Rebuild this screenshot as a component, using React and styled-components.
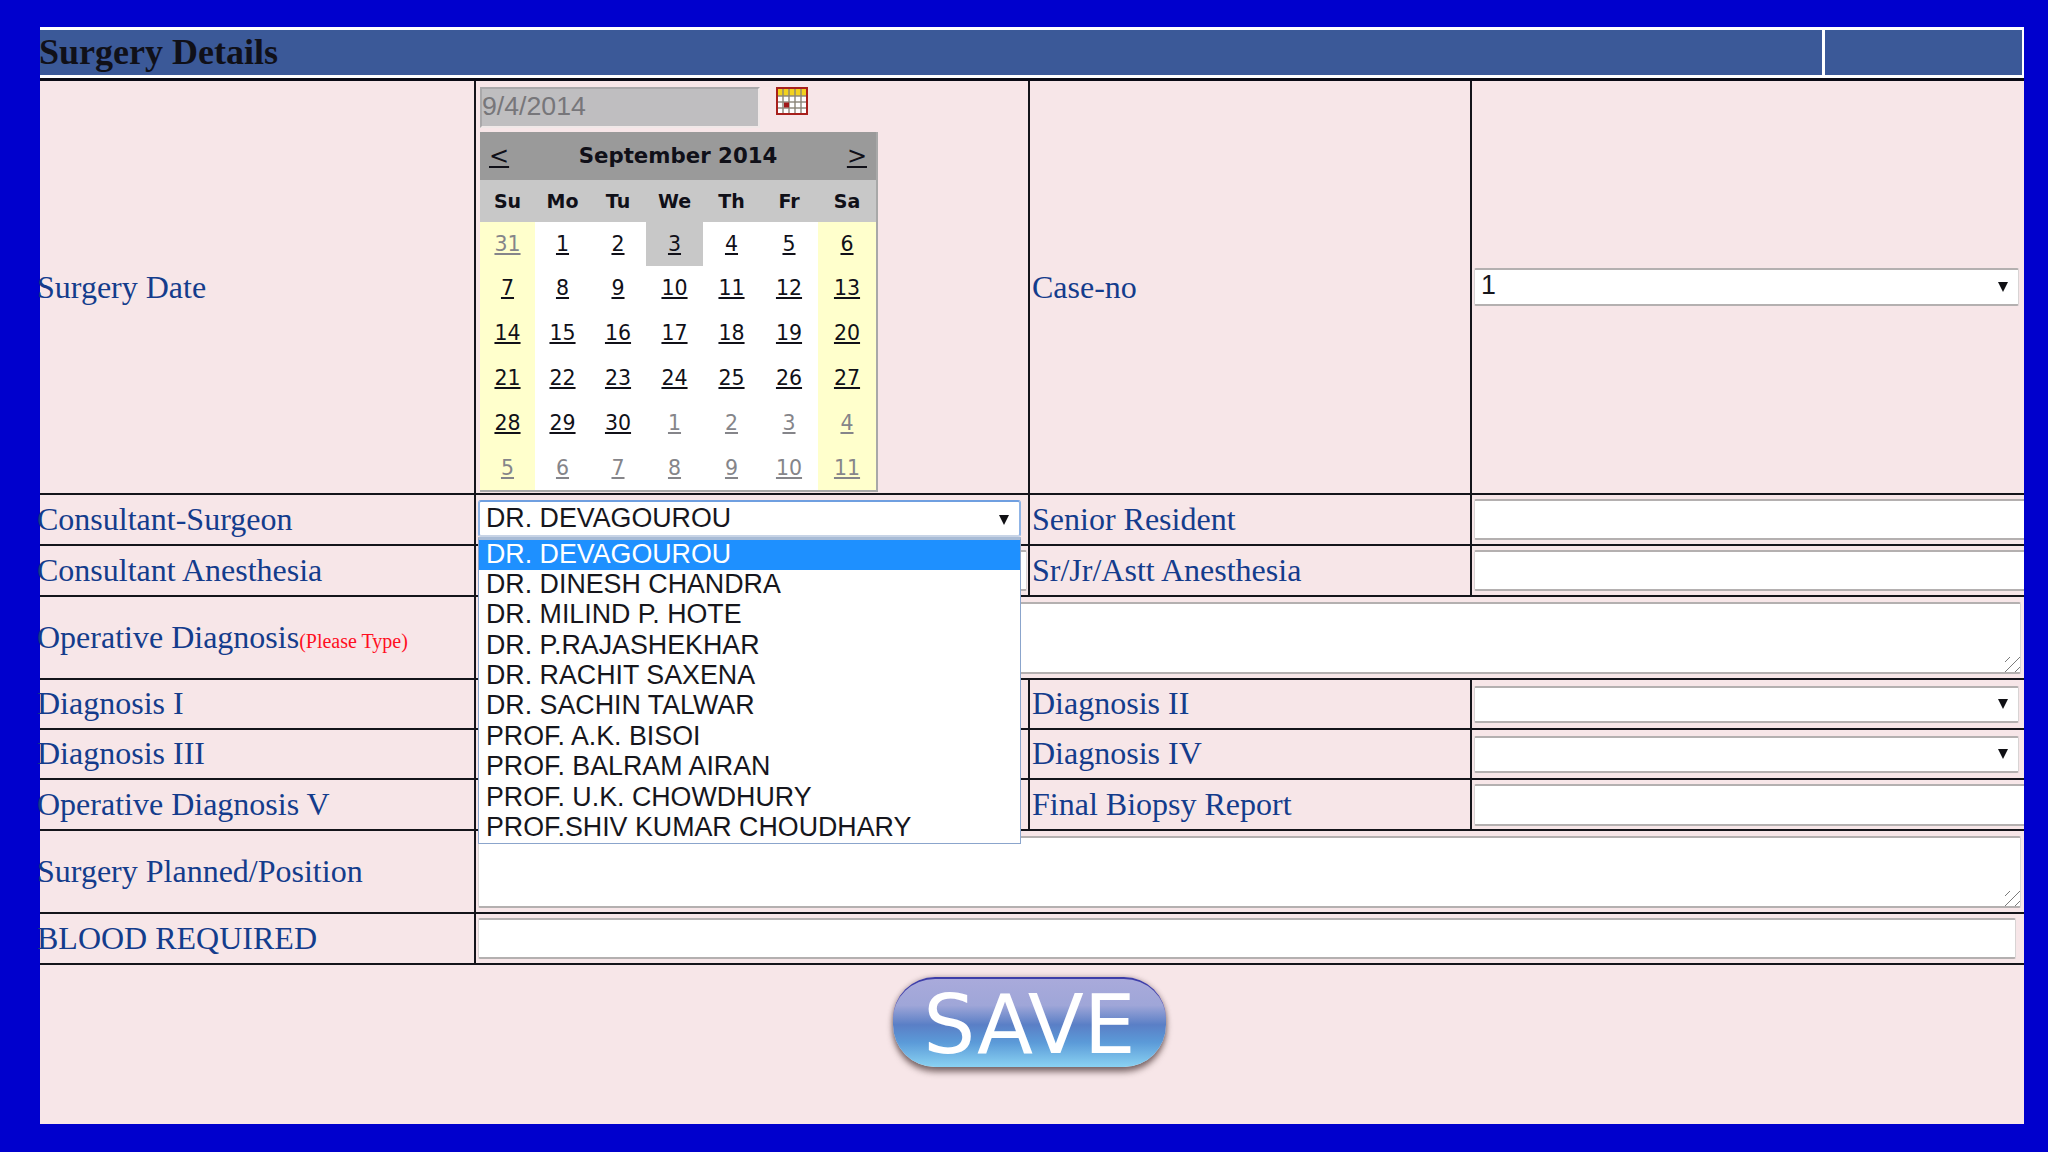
import React from "react";
import styled, { createGlobalStyle, css } from "styled-components";

const Global = createGlobalStyle`
  * { box-sizing: border-box; }
  html, body { margin: 0; padding: 0; background: #0000cd; }
  body { width: 2048px; height: 1152px; overflow: hidden; }
`;

const Page = styled.div`
  width: 2048px;
  height: 1152px;
  padding: 27px 24px 28px 40px;
`;

const Panel = styled.main`
  height: 1097px;
  background: #f7e6e8;
`;

const TitleBar = styled.header`
  display: flex;
  height: 51px;
  background: #ffffff;
  border-top: 3px solid #ffffff;
  border-bottom: 3px solid #ffffff;
  border-right: 2px solid #ffffff;
  gap: 3px;
`;

const TitleCell = styled.div`
  flex: ${(p) => (p.$side ? "0 0 197px" : "1 1 auto")};
  background: #3b5998;
  display: flex;
  align-items: center;
`;

const Title = styled.h1`
  margin: -2px 0 0 -1px;
  font: bold 36px "Liberation Serif", "Times New Roman", serif;
  color: #101018;
`;

const FormTable = styled.table`
  table-layout: fixed;
  width: 1984px;
  border-spacing: 0;
  border-collapse: separate;
  border-top: 3px solid #0a0a14;
`;

const Row = styled.tr`
  height: ${(p) => p.$h}px;
`;

const Cell = styled.td`
  padding: 0;
  vertical-align: middle;
  border-bottom: 2px solid #14141a;
  ${(p) => p.$rule && css`border-left: 2px solid #14141a;`}
  ${(p) => p.$field && css`padding-left: 2px;`}
  ${(p) => p.$clip && css`overflow: hidden;`}
`;

const Label = styled.label`
  display: block;
  margin: ${(p) => (p.$tight ? "-2px" : "0")} 0 0 ${(p) => (p.$inner ? "2px" : "-3px")};
  font: 32px "Liberation Serif", "Times New Roman", serif;
  color: #143c8c;
  white-space: nowrap;
`;

const Hint = styled.span`
  font-size: 20px;
  color: #ff0f1f;
`;

const fieldFrame = css`
  display: block;
  background: #ffffff;
  border-style: solid;
  border-color: #b4b0b0 #d8d4d4 #b4b0b0 #d8d4d4;
  border-width: 2px 1px 2px 1px;
  border-radius: 2px;
  outline: none;
`;

const TextField = styled.input`
  ${fieldFrame}
  width: ${(p) => p.$w}px;
  height: ${(p) => p.$h}px;
`;

const NoteField = styled.textarea`
  ${fieldFrame}
  width: 1543px;
  height: 72px;
  &::-webkit-resizer {
    background: repeating-linear-gradient(135deg, transparent 0 3px, #7a7a7a 3px 4px, transparent 4px 7px);
  }
`;

const DateCellBody = styled.div`
  display: flex;
  flex-direction: column;
  gap: 4px;
  padding: 5px 0 0 4px;
`;

const DateRow = styled.div`
  display: flex;
  align-items: flex-start;
  gap: 16px;
`;

const DateField = styled.input`
  display: block;
  width: 280px;
  height: 41px;
  padding: 0 0 2px;
  background: #bfbec0;
  color: #77767a;
  font: 26.7px "Liberation Sans", Arial, sans-serif;
  border-style: solid;
  border-color: #a9a8aa #f0e8e8 #f0e8e8 #a9a8aa;
  border-width: 2px;
  outline: none;
`;

const Calendar = styled.section`
  width: 398px;
  background: #ffffff;
  border-right: 2px solid #a8a8a8;
  border-bottom: 2px solid #a8a8a8;
  font-family: "DejaVu Sans", Verdana, sans-serif;
  color: #101018;
`;

const CalendarHead = styled.div`
  display: flex;
  align-items: center;
  justify-content: space-between;
  height: 48px;
  padding: 0 9px 0 9px;
  background: #9a9a9a;
  font-size: 21.3px;
  font-weight: bold;
`;

const NavLink = styled.a`
  color: #101018;
  font-weight: normal;
  font-size: 24px;
  text-decoration: underline;
`;

const WeekGrid = styled.div`
  display: grid;
  grid-template-columns: 55px 55px 56px 57px 57px 58px 58px;
`;

const WeekName = styled.div`
  height: 42px;
  line-height: 42px;
  text-align: center;
  background: #c8c8c8;
  font-size: 19px;
  font-weight: bold;
`;

const DayCell = styled.div`
  height: 44.8px;
  line-height: 45px;
  text-align: center;
  font-size: 20.5px;
  background: ${(p) => (p.$today ? "#c8c8c8" : p.$weekend ? "#ffffcc" : "#ffffff")};
`;

const DayLink = styled.a`
  color: ${(p) => (p.$muted ? "#85858a" : "#101018")};
  text-decoration: underline;
`;

const SelectWrap = styled.div`
  position: relative;
  width: ${(p) => p.$w}px;
  margin-bottom: 3px;
`;

const SelectBox = styled.div`
  ${fieldFrame}
  display: flex;
  align-items: center;
  justify-content: space-between;
  width: ${(p) => p.$w}px;
  height: ${(p) => p.$h}px;
  padding: 0 10px 3px 6px;
  font: 26.8px "Liberation Sans", Arial, sans-serif;
  color: #16161c;
  ${(p) =>
    p.$focus &&
    css`
      padding-bottom: 0;
      border-color: #6f9fe0 #8fb4e6 #c8d4e6 #8fb4e6;
      border-width: 2px;
      border-radius: 3px;
    `}
`;

const Arrow = styled.span`
  width: 0;
  height: 0;
  margin-top: 3px;
  border-left: 5px solid transparent;
  border-right: 5px solid transparent;
  border-top: 10px solid #101014;
`;

const OptionList = styled.ul`
  position: absolute;
  z-index: 5;
  top: 37px;
  left: 0;
  width: 543px;
  margin: 0;
  padding: 0;
  list-style: none;
  background: #ffffff;
  border: 1px solid #8ba5cc;
  border-top: 3px solid #a9bcd6;
  font: 26.8px "Liberation Sans", Arial, sans-serif;
  color: #16161c;
`;

const Option = styled.li`
  height: 30.4px;
  line-height: 29px;
  padding-left: 7px;
  white-space: nowrap;
  ${(p) => p.$on && css`background: #1e90ff; color: #ffffff;`}
`;

const SaveRow = styled.div`
  display: flex;
  justify-content: center;
  padding: 12px 5px 0 0;
`;

const SaveButton = styled.button`
  width: 273px;
  height: 90px;
  padding: 4px 0 0;
  border: none;
  border-top: 2px solid #3d3da8;
  border-radius: 42px;
  background: linear-gradient(180deg, #a9aadb 0%, #9fa6d8 30%, #5a7fc6 52%, #5b9ad8 72%, #8ad2f2 100%);
  box-shadow: 0 5px 6px rgba(70, 50, 50, 0.65), 0 0 5px rgba(70, 50, 60, 0.35);
  color: #ffffff;
  font: 82px "DejaVu Sans", Verdana, sans-serif;
  line-height: 1;
`;

const weekNames = ["Su", "Mo", "Tu", "We", "Th", "Fr", "Sa"];
const days = [
  31, 1, 2, 3, 4, 5, 6, 7, 8, 9, 10, 11, 12, 13, 14, 15, 16, 17, 18, 19, 20, 21, 22, 23, 24, 25, 26, 27, 28, 29, 30,
  1, 2, 3, 4, 5, 6, 7, 8, 9, 10, 11,
];
const surgeons = [
  "DR. DEVAGOUROU",
  "DR. DINESH CHANDRA",
  "DR. MILIND P. HOTE",
  "DR. P.RAJASHEKHAR",
  "DR. RACHIT SAXENA",
  "DR. SACHIN TALWAR",
  "PROF. A.K. BISOI",
  "PROF. BALRAM AIRAN",
  "PROF. U.K. CHOWDHURY",
  "PROF.SHIV KUMAR CHOUDHARY",
];

const CalendarIcon = () => (
  <svg width="32" height="28" viewBox="0 0 32 28" aria-hidden="true">
    <rect x="1" y="1" width="30" height="26" fill="#fff" stroke="#a8201c" strokeWidth="2" />
    <rect x="2" y="2" width="28" height="7" fill="#f2d21e" />
    {[7, 13, 19, 25].map((x) => (
      <line key={x} x1={x} y1="2" x2={x} y2="26" stroke="#8a8478" strokeWidth="1.4" />
    ))}
    {[9, 15, 21].map((y) => (
      <line key={y} x1="2" y1={y} x2="30" y2={y} stroke="#8a8478" strokeWidth="1.4" />
    ))}
    <rect x="8" y="15.5" width="5" height="5" fill="#a01818" />
  </svg>
);

const MonthPicker = () => (
  <Calendar>
    <CalendarHead>
      <NavLink>&lt;</NavLink>
      <span>September 2014</span>
      <NavLink>&gt;</NavLink>
    </CalendarHead>
    <WeekGrid>
      {weekNames.map((n) => (
        <WeekName key={n}>{n}</WeekName>
      ))}
      {days.map((d, i) => (
        <DayCell key={i} $weekend={i % 7 === 0 || i % 7 === 6} $today={i === 3}>
          <DayLink $muted={i === 0 || i > 30}>{d}</DayLink>
        </DayCell>
      ))}
    </WeekGrid>
  </Calendar>
);

const EmptySelect = ({ w = 542, h = 37 }) => (
  <SelectBox $w={w} $h={h}>
    <span />
    <Arrow />
  </SelectBox>
);

export default function App() {
  return (
    <Page>
      <Global />
      <Panel>
        <TitleBar>
          <TitleCell>
            <Title>Surgery Details</Title>
          </TitleCell>
          <TitleCell $side />
        </TitleBar>
        <FormTable>
          <colgroup>
            <col style={{ width: 434 }} />
            <col style={{ width: 554 }} />
            <col style={{ width: 442 }} />
            <col style={{ width: 554 }} />
          </colgroup>
          <tbody>
            <Row $h={414}>
              <Cell>
                <Label>Surgery Date</Label>
              </Cell>
              <Cell $rule>
                <DateCellBody>
                  <DateRow>
                    <DateField readOnly value="9/4/2014" />
                    <CalendarIcon />
                  </DateRow>
                  <MonthPicker />
                </DateCellBody>
              </Cell>
              <Cell $rule>
                <Label $inner>Case-no</Label>
              </Cell>
              <Cell $rule $field>
                <SelectBox $w={545} $h={38}>
                  <span>1</span>
                  <Arrow />
                </SelectBox>
              </Cell>
            </Row>
            <Row $h={51}>
              <Cell>
                <Label>Consultant-Surgeon</Label>
              </Cell>
              <Cell $rule $field>
                <SelectWrap $w={543}>
                  <SelectBox $focus $w={543} $h={37}>
                    <span>DR. DEVAGOUROU</span>
                    <Arrow />
                  </SelectBox>
                  <OptionList>
                    {surgeons.map((s, i) => (
                      <Option key={s} $on={i === 0}>
                        {s}
                      </Option>
                    ))}
                  </OptionList>
                </SelectWrap>
              </Cell>
              <Cell $rule>
                <Label $inner>Senior Resident</Label>
              </Cell>
              <Cell $rule $field $clip>
                <TextField $w={560} $h={41} />
              </Cell>
            </Row>
            <Row $h={51}>
              <Cell>
                <Label>Consultant Anesthesia</Label>
              </Cell>
              <Cell $rule $field>
                <TextField $w={549} $h={41} />
              </Cell>
              <Cell $rule>
                <Label $inner>Sr/Jr/Astt Anesthesia</Label>
              </Cell>
              <Cell $rule $field $clip>
                <TextField $w={560} $h={41} />
              </Cell>
            </Row>
            <Row $h={83}>
              <Cell>
                <Label>
                  Operative Diagnosis<Hint>(Please Type)</Hint>
                </Label>
              </Cell>
              <Cell $rule $field colSpan={3}>
                <NoteField />
              </Cell>
            </Row>
            <Row $h={50}>
              <Cell>
                <Label $tight>Diagnosis I</Label>
              </Cell>
              <Cell $rule $field>
                <EmptySelect />
              </Cell>
              <Cell $rule>
                <Label $inner $tight>Diagnosis II</Label>
              </Cell>
              <Cell $rule $field>
                <EmptySelect w={545} />
              </Cell>
            </Row>
            <Row $h={50}>
              <Cell>
                <Label $tight>Diagnosis III</Label>
              </Cell>
              <Cell $rule $field>
                <EmptySelect />
              </Cell>
              <Cell $rule>
                <Label $inner $tight>Diagnosis IV</Label>
              </Cell>
              <Cell $rule $field>
                <EmptySelect w={545} />
              </Cell>
            </Row>
            <Row $h={51}>
              <Cell>
                <Label>Operative Diagnosis V</Label>
              </Cell>
              <Cell $rule $field>
                <EmptySelect />
              </Cell>
              <Cell $rule>
                <Label $inner>Final Biopsy Report</Label>
              </Cell>
              <Cell $rule $field $clip>
                <TextField $w={560} $h={42} />
              </Cell>
            </Row>
            <Row $h={83}>
              <Cell>
                <Label>Surgery Planned/Position</Label>
              </Cell>
              <Cell $rule $field colSpan={3}>
                <NoteField />
              </Cell>
            </Row>
            <Row $h={51}>
              <Cell>
                <Label>BLOOD REQUIRED</Label>
              </Cell>
              <Cell $rule $field colSpan={3}>
                <TextField $w={1538} $h={41} />
              </Cell>
            </Row>
          </tbody>
        </FormTable>
        <SaveRow>
          <SaveButton type="button">SAVE</SaveButton>
        </SaveRow>
      </Panel>
    </Page>
  );
}
